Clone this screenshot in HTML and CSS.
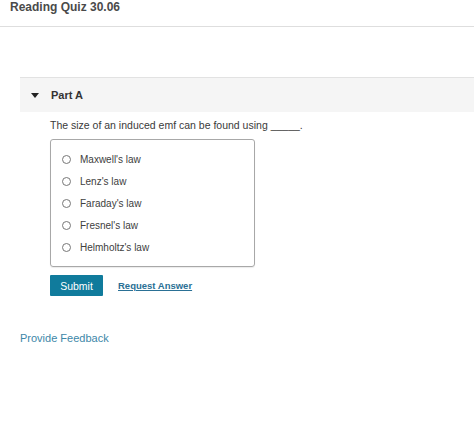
FILE: index.html
```html
<!DOCTYPE html>
<html>
<head>
<meta charset="utf-8">
<link rel="stylesheet" href="styles.css">
</head>
<body>
<header class="header">
  <h1 class="title">Reading Quiz 30.06</h1>
</header>
<main class="main">
  <section class="part">
    <div class="part-head">
      <span class="caret"></span>
      <span class="part-title">Part A</span>
    </div>
    <div class="part-body">
      <p class="question">The size of an induced emf can be found using _____.</p>
      <div class="choices">
        <label class="choice"><span class="radio"></span><span class="choice-text">Maxwell's law</span></label>
        <label class="choice"><span class="radio"></span><span class="choice-text">Lenz's law</span></label>
        <label class="choice"><span class="radio"></span><span class="choice-text">Faraday's law</span></label>
        <label class="choice"><span class="radio"></span><span class="choice-text">Fresnel's law</span></label>
        <label class="choice"><span class="radio"></span><span class="choice-text">Helmholtz's law</span></label>
      </div>
      <div class="actions">
        <button class="submit">Submit</button>
        <a class="request" href="#">Request Answer</a>
      </div>
    </div>
  </section>
  <a class="feedback" href="#">Provide Feedback</a>
</main>
</body>
</html>
```
FILE: styles.css
```css
html, body {
  margin: 0;
  padding: 0;
  background: #ffffff;
  font-family: "Liberation Sans", Arial, sans-serif;
  color: #333333;
}

.header {
  height: 26px;
  padding: 0 10px;
  border-bottom: 1px solid #dedede;
}

.title {
  margin: 0;
  font-size: 12px;
  line-height: 14px;
  font-weight: bold;
  color: #4a4a4a;
}

.main {
  padding: 50px 0 0 20px;
}

.part-head {
  display: flex;
  align-items: center;
  height: 34px;
  padding-left: 11px;
  background: #f5f5f5;
  border-top: 1px solid #e2e2e2;
}

.caret {
  width: 0;
  height: 0;
  border-left: 4px solid transparent;
  border-right: 4px solid transparent;
  border-top: 5px solid #222222;
  margin-right: 12px;
}

.part-title {
  font-size: 11px;
  font-weight: bold;
  color: #333333;
}

.part-body {
  padding-left: 30px;
}

.question {
  margin: 6px 0 0;
  font-size: 10.5px;
  line-height: 14px;
  color: #3a3a3a;
}

.choices {
  width: 203px;
  margin-top: 7px;
  padding: 8px 0;
  border: 1px solid #a8a8a8;
  border-radius: 3px;
  box-shadow: 0 1px 1px rgba(0, 0, 0, 0.08);
}

.choice {
  display: flex;
  align-items: center;
  height: 22px;
  padding-left: 11px;
}

.radio {
  box-sizing: border-box;
  width: 9px;
  height: 9px;
  border: 1px solid #777777;
  border-radius: 50%;
  background: #ffffff;
  margin-right: 9px;
}

.choice-text {
  font-size: 10px;
  color: #404040;
}

.actions {
  display: flex;
  align-items: center;
  margin-top: 8px;
}

.submit {
  width: 53px;
  height: 21px;
  padding: 0;
  border: none;
  border-radius: 1px;
  background: #107b9c;
  color: #ffffff;
  font-family: "Liberation Sans", Arial, sans-serif;
  font-size: 10.5px;
}

.request {
  margin-left: 15px;
  font-size: 9.5px;
  font-weight: bold;
  color: #2a7095;
  text-decoration: underline;
}

.feedback {
  display: inline-block;
  margin-top: 35px;
  font-size: 11px;
  line-height: 14px;
  color: #3d87a8;
  text-decoration: none;
}
```
